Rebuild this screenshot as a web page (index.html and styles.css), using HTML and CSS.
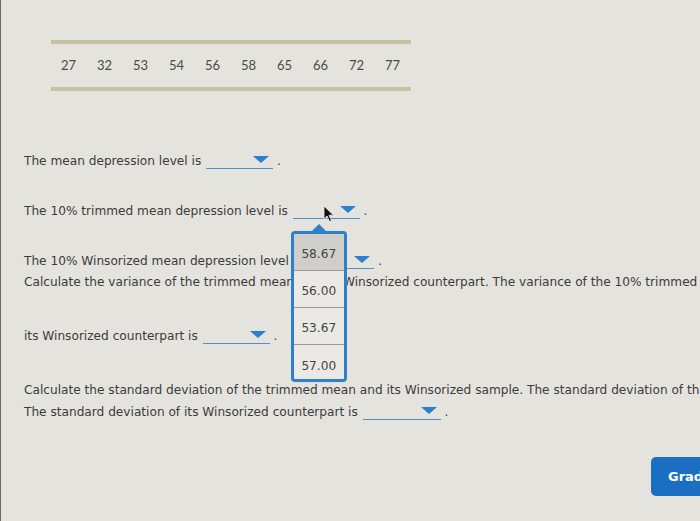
FILE: index.html
```html
<!DOCTYPE html>
<html>
<head>
<meta charset="utf-8">
<link rel="stylesheet" href="styles.css">
</head>
<body>
<div class="page">
  <div class="data">
    <span>27</span><span>32</span><span>53</span><span>54</span><span>56</span><span>58</span><span>65</span><span>66</span><span>72</span><span>77</span>
  </div>

  <p class="q q1">The mean depression level is <span class="dd"><span class="tri"></span></span> .</p>

  <p class="q q2">The 10% trimmed mean depression level is <span class="dd dd-open"><span class="tri"></span>
    <svg class="cursor" width="12" height="18" viewBox="0 0 12 18"><path d="M1 1 L1 14 L4 11 L6.5 16.5 L8.5 15.5 L6 10.2 L10.5 10.2 Z" fill="#111" stroke="#eee" stroke-width="0.8"/></svg>
    <span class="menu">
      <span class="caret"></span>
      <span class="opt sel">58.67</span>
      <span class="opt">56.00</span>
      <span class="opt">53.67</span>
      <span class="opt last">57.00</span>
    </span>
  </span> .</p>

  <p class="q q3">The 10% Winsorized mean depression level is <span class="dd dd-narrow"><span class="tri"></span></span> .</p>

  <p class="q q4 long">Calculate the variance of the trimmed mean and its Winsorized counterpart. The variance of the 10% trimmed mean is</p>
  <p class="q q5">its Winsorized counterpart is <span class="dd"><span class="tri"></span></span> .</p>

  <p class="q q6 long">Calculate the standard deviation of the trimmed mean and its Winsorized sample. The standard deviation of the trimmed mean is</p>
  <p class="q q7">The standard deviation of its Winsorized counterpart is <span class="dd dd-wide"><span class="tri"></span></span> .</p>

  <div class="actions"><button class="grade">Grade</button></div>
</div>
</body>
</html>
```

FILE: styles.css
```css
html, body {
  margin: 0;
  padding: 0;
}
body {
  width: 700px;
  height: 521px;
  overflow: hidden;
  background: #e5e3de;
  border-left: 1px solid #6a6a68;
  box-sizing: border-box;
  font-family: "DejaVu Sans", Verdana, sans-serif;
  color: #3b3b3b;
}
.page {
  padding: 40px 0 0 23px;
}
.data {
  margin-left: 27px;
  width: 360px;
  border-top: 4px solid #c9c1a3;
  border-bottom: 4px solid #c9c1a3;
  display: flex;
  padding: 12px 0 13px 10px;
  box-sizing: border-box;
  font-family: Lato, "Open Sans", sans-serif;
  font-size: 13px;
  line-height: 18px;
  color: #4a4a4a;
}
.data span {
  width: 36px;
  flex: none;
}
.q {
  margin: 0;
  font-size: 12.15px;
  line-height: 22px;
  white-space: nowrap;
}
.q1 { margin-top: 59px; }
.q2 { margin-top: 28px; }
.q3 { margin-top: 28px; }
.q4 { margin-top: -1px; }
.q5 { margin-top: 32px; }
.q6 { margin-top: 32px; }
.q7 { margin-top: 0; }

.dd {
  display: inline-block;
  position: relative;
  width: 67px;
  height: 14px;
  border-bottom: 1.5px solid #4f8dcb;
  vertical-align: -4px;
  margin-left: 1px;
}
.dd-wide { width: 78px; }
.tri {
  position: absolute;
  right: 4px;
  bottom: 5px;
  width: 0;
  height: 0;
  border-left: 8px solid transparent;
  border-right: 8px solid transparent;
  border-top: 7px solid #2c7fd0;
}
.cursor {
  position: absolute;
  left: 30px;
  top: 1px;
}
.menu {
  position: absolute;
  left: -2px;
  top: 27px;
  width: 56px;
  box-sizing: border-box;
  border: 3px solid #2f7fc9;
  border-radius: 4px;
  background: #ebe9e5;
  display: flex;
  flex-direction: column;
  z-index: 2;
}
.caret {
  position: absolute;
  left: 50%;
  top: -10px;
  margin-left: -7px;
  width: 0;
  height: 0;
  border-left: 7px solid transparent;
  border-right: 7px solid transparent;
  border-bottom: 7px solid #2f7fc9;
}
.opt {
  display: block;
  height: 34px;
  padding-top: 2px;
  line-height: 36px;
  text-align: center;
  font-size: 12.15px;
  color: #444;
  border-bottom: 1px solid #9a9a9a;
}
.opt.sel { background: #cfcecb; }
.opt.last { border-bottom: none; height: 32px; line-height: 38px; }

.actions {
  margin-top: 34px;
  padding-left: 627px;
}
.grade {
  width: 80px;
  height: 39px;
  border: none;
  border-radius: 5px;
  background: #1b6fc2;
  color: #fff;
  font-family: "DejaVu Sans", Verdana, sans-serif;
  font-weight: bold;
  font-size: 13px;
  text-align: left;
  padding-left: 17px;
}
```
